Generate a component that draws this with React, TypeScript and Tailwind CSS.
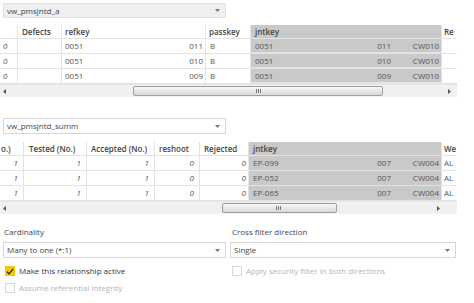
import React from "react";

const font = { fontFamily: '"Open Sans", "Noto Sans", sans-serif' };

function Caret() {
  return (
    <svg width="5" height="3" viewBox="0 0 5 3" className="shrink-0">
      <path d="M0 0 L5 0 L2.5 3 Z" fill="#777" />
    </svg>
  );
}

function Dropdown({ text, gray, className = "" }: { text: string; gray?: boolean; className?: string }) {
  return (
    <div
      className={`flex items-center justify-between border ${gray ? "bg-[#efefef] border-[#e2e2e2]" : "bg-white border-[#d6d6d6]"} pl-[3px] pr-[5px] text-[#444] ${className}`}
    >
      <span>{text}</span>
      <Caret />
    </div>
  );
}

function ScrollBar({ thumbLeft, thumbWidth, gripLeft, rightArrow }: { thumbLeft: number; thumbWidth: number; gripLeft: number; rightArrow: number }) {
  return (
    <div className="relative h-[13px] w-[457px] bg-[#f0f0f0] border-t border-[#e6e6e6]">
      <svg width="3" height="5" viewBox="0 0 3 5" className="absolute left-[3px] top-[4px]">
        <path d="M3 0 L0 2.5 L3 5 Z" fill="#555" />
      </svg>
      <div
        className="absolute top-[1px] h-[10px] rounded-[2px] border border-[#9e9e9e] bg-gradient-to-b from-[#f7f7f7] to-[#d9d9d9]"
        style={{ left: thumbLeft, width: thumbWidth }}
      />
      <div className="absolute top-[4px] flex gap-[1px]" style={{ left: gripLeft }}>
        <div className="w-[1px] h-[4px] bg-[#777]" />
        <div className="w-[1px] h-[4px] bg-[#777]" />
        <div className="w-[1px] h-[4px] bg-[#777]" />
      </div>
      <svg width="3" height="5" viewBox="0 0 3 5" className="absolute top-[4px]" style={{ left: rightArrow }}>
        <path d="M0 0 L3 2.5 L0 5 Z" fill="#555" />
      </svg>
    </div>
  );
}

function Check({ checked, disabled }: { checked?: boolean; disabled?: boolean }) {
  if (checked)
    return (
      <div className="w-[10px] h-[10px] bg-[#f2c80f] flex items-center justify-center shrink-0">
        <svg width="8" height="7" viewBox="0 0 8 7">
          <path d="M0.8 3.6 L3 5.8 L7.2 0.8" stroke="#222" strokeWidth="1.3" fill="none" />
        </svg>
      </div>
    );
  return <div className={`w-[10px] h-[10px] border ${disabled ? "border-[#d8d8d8]" : "border-[#888]"} bg-white shrink-0`} />;
}

const cellBase = "h-full flex items-center border-r border-[#e3e3e3] overflow-hidden whitespace-nowrap";

export default function App() {
  const t1rows = [
    ["011", "0051", "011"],
    ["010", "0051", "010"],
    ["009", "0051", "009"],
  ];
  const t2rows = ["EP-099", "EP-052", "EP-065"];
  return (
    <div className="w-[474px] h-[303px] bg-white overflow-hidden text-[8px] text-[#444]" style={font}>
      <div className="pt-[3px] pl-[3px]">
        <Dropdown text="vw_pmsjntd_a" gray className="w-[223px] h-[15px]" />
      </div>

      {/* Table 1 */}
      <div className="mt-[7px] w-[457px]">
        <div className="flex h-[14px] font-semibold text-[#444] border-b border-[#e3e3e3]">
          <div className={`${cellBase} w-[18px]`} />
          <div className={`${cellBase} w-[44px] pl-[4px]`}>Defects</div>
          <div className={`${cellBase} w-[144px] pl-[3px]`}>refkey</div>
          <div className={`${cellBase} w-[45px] pl-[3px]`}>passkey</div>
          <div className={`${cellBase} w-[191px] pl-[4px] bg-[#c9c9c9] border-[#c9c9c9]`}>jntkey</div>
          <div className={`${cellBase} w-[15px] pl-[2px] border-r-0`}>Re</div>
        </div>
        {t1rows.map((r, i) => (
          <div key={i} className="flex h-[15px] text-[#555] border-b border-[#e3e3e3]">
            <div className={`${cellBase} w-[18px] pl-[3px] italic`}>0</div>
            <div className={`${cellBase} w-[44px]`} />
            <div className={`${cellBase} w-[144px] pl-[3px] pr-[2px] justify-between`}>
              <span>0051</span>
              <span>{r[0]}</span>
            </div>
            <div className={`${cellBase} w-[45px] pl-[4px]`}>B</div>
            <div className={`${cellBase} w-[191px] pl-[4px] pr-[2px] bg-[#c9c9c9] border-[#c9c9c9] border-b`}>
              <span className="flex-1">{r[1]}</span>
              <span>{r[2]}</span>
              <span className="w-[48px] text-right">CW010</span>
            </div>
            <div className={`${cellBase} w-[15px] border-r-0`} />
          </div>
        ))}
        <ScrollBar thumbLeft={133} thumbWidth={250} gripLeft={256} rightArrow={448} />
      </div>

      <div className="pt-[21px] pl-[3px]">
        <Dropdown text="vw_pmsjntd_summ" className="w-[223px] h-[16px]" />
      </div>

      {/* Table 2 */}
      <div className="mt-[8px] w-[457px]">
        <div className="flex h-[14px] font-semibold text-[#444] border-b border-[#e3e3e3]">
          <div className={`${cellBase} w-[24px] pl-[1px]`}>o.)</div>
          <div className={`${cellBase} w-[63px] pl-[5px]`}>Tested (No.)</div>
          <div className={`${cellBase} w-[68px] pl-[4px]`}>Accepted (No.)</div>
          <div className={`${cellBase} w-[45px] pl-[4px]`}>reshoot</div>
          <div className={`${cellBase} w-[49px] pl-[4px]`}>Rejected</div>
          <div className={`${cellBase} w-[193px] pl-[4px] bg-[#c9c9c9] border-[#c9c9c9]`}>jntkey</div>
          <div className={`${cellBase} w-[15px] pl-[2px] border-r-0`}>We</div>
        </div>
        {t2rows.map((r, i) => (
          <div key={i} className="flex h-[15px] text-[#555] border-b border-[#e3e3e3]">
            <div className={`${cellBase} w-[24px] justify-end pr-[5px] italic`}>1</div>
            <div className={`${cellBase} w-[63px] justify-end pr-[5px] italic`}>1</div>
            <div className={`${cellBase} w-[68px] justify-end pr-[5px] italic`}>1</div>
            <div className={`${cellBase} w-[45px] justify-end pr-[5px] italic`}>0</div>
            <div className={`${cellBase} w-[49px] justify-end pr-[2px] italic`}>0</div>
            <div className={`${cellBase} w-[193px] pl-[4px] pr-[2px] bg-[#c9c9c9] border-[#c9c9c9]`}>
              <span className="flex-1">{r}</span>
              <span>007</span>
              <span className="w-[48px] text-right">CW004</span>
            </div>
            <div className={`${cellBase} w-[15px] pl-[2px] border-r-0`}>AL</div>
          </div>
        ))}
        <ScrollBar thumbLeft={222} thumbWidth={115} gripLeft={276} rightArrow={437} />
      </div>

      {/* Options */}
      <div className="flex gap-[4px] pl-[3px] mt-[12px]">
        <div className="w-[223px] flex flex-col">
          <div className="pl-[1px] h-[12px] text-[#444]">Cardinality</div>
          <Dropdown text="Many to one (*:1)" className="mt-[4px] w-[223px] h-[16px]" />
          <div className="flex items-center gap-[4px] mt-[7px] pl-[2px] h-[12px] text-[#333]">
            <Check checked />
            <span>Make this relationship active</span>
          </div>
          <div className="flex items-center gap-[4px] mt-[5px] pl-[2px] h-[12px] text-[#b4b4b4]">
            <Check disabled />
            <span>Assume referential integrity</span>
          </div>
        </div>
        <div className="w-[226px] flex flex-col">
          <div className="pl-[2px] h-[12px] text-[#444]">Cross filter direction</div>
          <Dropdown text="Single" className="mt-[4px] w-[226px] h-[16px]" />
          <div className="flex items-center gap-[4px] mt-[7px] pl-[2px] h-[12px] text-[#b4b4b4]">
            <Check disabled />
            <span>Apply security filter in both directions</span>
          </div>
        </div>
      </div>
    </div>
  );
}
